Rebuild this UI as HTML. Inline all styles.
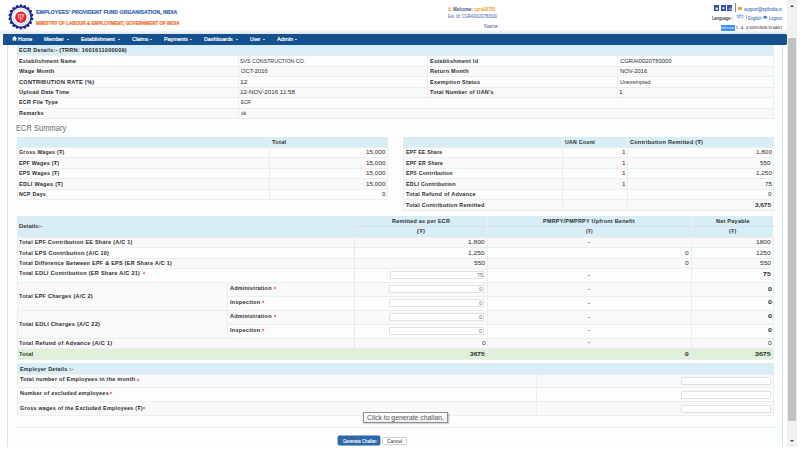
<!DOCTYPE html>
<html><head><meta charset="utf-8">
<style>
html,body{margin:0;padding:0;overflow:hidden}
body{width:800px;height:454px;position:relative;background:#ffffff;font-family:"Liberation Sans",sans-serif}
.r{position:absolute}
.t{position:absolute;white-space:nowrap;line-height:1;transform-origin:0 0}
</style></head><body>
<div class="r" style="left:0.00px;top:29.30px;width:787.00px;height:5.20px;background:linear-gradient(#ffffff,#f4f6f9 40%,#dfe5ee)"></div><div class="r" style="left:7.50px;top:44.50px;width:775.50px;height:402.50px;background:#fcfdfd"></div><div class="r" style="left:7.30px;top:44.50px;width:1.00px;height:402.50px;background:#d3e4f3"></div><div class="r" style="left:782.30px;top:44.50px;width:1.00px;height:402.50px;background:#d3e4f3"></div><div class="r" style="left:787.00px;top:0.00px;width:10.00px;height:447.00px;background:#f1f1f1"></div><div class="r" style="left:788.00px;top:38.00px;width:8.00px;height:382.70px;background:#c1c1c1"></div><div class="r" style="left:713.50px;top:5.10px;width:5.50px;height:5.65px;background:#2f50a8"></div><div class="r" style="left:720.50px;top:5.10px;width:5.20px;height:5.65px;background:#2f50a8"></div><div class="r" style="left:727.00px;top:5.10px;width:5.10px;height:5.65px;background:#2f50a8"></div><div class="r" style="left:735.20px;top:3.10px;width:0.80px;height:9.40px;background:#7a88c8"></div><div class="r" style="left:738.00px;top:6.80px;width:4.40px;height:3.30px;background:#f0a830;border-radius:0.6px"></div><div class="r" style="left:745.90px;top:15.40px;width:0.60px;height:5.00px;background:#b5b5b5"></div><div class="r" style="left:720.50px;top:25.20px;width:14.00px;height:5.90px;background:#3d8ff0"></div><div class="r" style="left:16.80px;top:44.00px;width:757.20px;height:11.30px;background:#d9edf7"></div><div class="r" style="left:16.80px;top:65.80px;width:757.20px;height:10.40px;background:#f9f9f9"></div><div class="r" style="left:16.80px;top:86.60px;width:757.20px;height:10.50px;background:#f9f9f9"></div><div class="r" style="left:16.80px;top:107.60px;width:757.20px;height:10.40px;background:#f9f9f9"></div><div class="r" style="left:16.80px;top:55.30px;width:757.20px;height:1.00px;background:#ededed"></div><div class="r" style="left:16.80px;top:65.80px;width:757.20px;height:1.00px;background:#ededed"></div><div class="r" style="left:16.80px;top:76.20px;width:757.20px;height:1.00px;background:#ededed"></div><div class="r" style="left:16.80px;top:86.60px;width:757.20px;height:1.00px;background:#ededed"></div><div class="r" style="left:16.80px;top:97.10px;width:757.20px;height:1.00px;background:#ededed"></div><div class="r" style="left:16.80px;top:107.60px;width:757.20px;height:1.00px;background:#ededed"></div><div class="r" style="left:16.80px;top:118.00px;width:757.20px;height:1.00px;background:#ededed"></div><div class="r" style="left:16.80px;top:55.30px;width:1.00px;height:63.20px;background:#ededed"></div><div class="r" style="left:773.00px;top:55.30px;width:1.00px;height:63.20px;background:#ededed"></div><div class="r" style="left:238.00px;top:55.30px;width:1.00px;height:62.70px;background:#ededed"></div><div class="r" style="left:427.20px;top:55.30px;width:1.00px;height:41.80px;background:#ededed"></div><div class="r" style="left:617.30px;top:55.30px;width:1.00px;height:41.80px;background:#ededed"></div><div class="r" style="left:17.00px;top:136.50px;width:370.80px;height:10.30px;background:#d9edf7"></div><div class="r" style="left:17.00px;top:157.20px;width:370.80px;height:10.50px;background:#f9f9f9"></div><div class="r" style="left:17.00px;top:178.20px;width:370.80px;height:10.50px;background:#f9f9f9"></div><div class="r" style="left:17.00px;top:146.80px;width:370.80px;height:1.00px;background:#ededed"></div><div class="r" style="left:17.00px;top:157.20px;width:370.80px;height:1.00px;background:#ededed"></div><div class="r" style="left:17.00px;top:167.70px;width:370.80px;height:1.00px;background:#ededed"></div><div class="r" style="left:17.00px;top:178.20px;width:370.80px;height:1.00px;background:#ededed"></div><div class="r" style="left:17.00px;top:188.70px;width:370.80px;height:1.00px;background:#ededed"></div><div class="r" style="left:17.00px;top:199.20px;width:370.80px;height:1.00px;background:#ededed"></div><div class="r" style="left:17.00px;top:146.80px;width:1.00px;height:53.40px;background:#ededed"></div><div class="r" style="left:386.80px;top:146.80px;width:1.00px;height:53.40px;background:#ededed"></div><div class="r" style="left:269.30px;top:136.50px;width:1.00px;height:62.70px;background:#ededed"></div><div class="r" style="left:403.30px;top:136.50px;width:370.40px;height:10.30px;background:#d9edf7"></div><div class="r" style="left:403.30px;top:157.30px;width:370.40px;height:10.50px;background:#f9f9f9"></div><div class="r" style="left:403.30px;top:178.30px;width:370.40px;height:10.50px;background:#f9f9f9"></div><div class="r" style="left:403.30px;top:199.30px;width:370.40px;height:10.50px;background:#f9f9f9"></div><div class="r" style="left:403.30px;top:146.80px;width:370.40px;height:1.00px;background:#ededed"></div><div class="r" style="left:403.30px;top:157.30px;width:370.40px;height:1.00px;background:#ededed"></div><div class="r" style="left:403.30px;top:167.80px;width:370.40px;height:1.00px;background:#ededed"></div><div class="r" style="left:403.30px;top:178.30px;width:370.40px;height:1.00px;background:#ededed"></div><div class="r" style="left:403.30px;top:188.80px;width:370.40px;height:1.00px;background:#ededed"></div><div class="r" style="left:403.30px;top:199.30px;width:370.40px;height:1.00px;background:#ededed"></div><div class="r" style="left:403.30px;top:209.80px;width:370.40px;height:1.00px;background:#ededed"></div><div class="r" style="left:403.30px;top:146.80px;width:1.00px;height:64.00px;background:#ededed"></div><div class="r" style="left:772.70px;top:146.80px;width:1.00px;height:64.00px;background:#ededed"></div><div class="r" style="left:562.00px;top:136.50px;width:1.00px;height:73.30px;background:#ededed"></div><div class="r" style="left:627.30px;top:136.50px;width:1.00px;height:73.30px;background:#ededed"></div><div class="r" style="left:16.80px;top:216.00px;width:756.70px;height:21.00px;background:#d9edf7"></div><div class="r" style="left:354.00px;top:226.20px;width:419.50px;height:1.00px;background:#cfe2ee"></div><div class="r" style="left:16.80px;top:237.00px;width:756.70px;height:10.40px;background:#f9f9f9"></div><div class="r" style="left:16.80px;top:257.80px;width:756.70px;height:10.50px;background:#f9f9f9"></div><div class="r" style="left:16.80px;top:282.20px;width:756.70px;height:13.80px;background:#f9f9f9"></div><div class="r" style="left:16.80px;top:310.10px;width:756.70px;height:14.00px;background:#f9f9f9"></div><div class="r" style="left:16.80px;top:338.10px;width:756.70px;height:10.30px;background:#f9f9f9"></div><div class="r" style="left:16.80px;top:296.00px;width:210.50px;height:14.10px;background:#f9f9f9"></div><div class="r" style="left:16.80px;top:324.10px;width:210.50px;height:14.00px;background:#f9f9f9"></div><div class="r" style="left:16.80px;top:348.40px;width:756.70px;height:10.40px;background:#dff0d8"></div><div class="r" style="left:16.80px;top:237.00px;width:756.70px;height:1.00px;background:#ededed"></div><div class="r" style="left:16.80px;top:247.40px;width:756.70px;height:1.00px;background:#ededed"></div><div class="r" style="left:16.80px;top:257.80px;width:756.70px;height:1.00px;background:#ededed"></div><div class="r" style="left:16.80px;top:268.30px;width:756.70px;height:1.00px;background:#ededed"></div><div class="r" style="left:16.80px;top:282.20px;width:756.70px;height:1.00px;background:#ededed"></div><div class="r" style="left:227.30px;top:296.00px;width:546.20px;height:1.00px;background:#ededed"></div><div class="r" style="left:16.80px;top:310.10px;width:756.70px;height:1.00px;background:#ededed"></div><div class="r" style="left:227.30px;top:324.10px;width:546.20px;height:1.00px;background:#ededed"></div><div class="r" style="left:16.80px;top:338.10px;width:756.70px;height:1.00px;background:#ededed"></div><div class="r" style="left:16.80px;top:348.40px;width:756.70px;height:1.00px;background:#ededed"></div><div class="r" style="left:16.80px;top:358.80px;width:756.70px;height:1.00px;background:#ededed"></div><div class="r" style="left:16.80px;top:237.00px;width:1.00px;height:122.00px;background:#ededed"></div><div class="r" style="left:772.50px;top:237.00px;width:1.00px;height:122.00px;background:#ededed"></div><div class="r" style="left:227.30px;top:282.20px;width:1.00px;height:55.90px;background:#ededed"></div><div class="r" style="left:354.00px;top:216.00px;width:1.00px;height:132.40px;background:#e8e8e8"></div><div class="r" style="left:486.70px;top:216.00px;width:1.00px;height:142.80px;background:#ededed"></div><div class="r" style="left:691.10px;top:216.00px;width:1.00px;height:142.80px;background:#ededed"></div><div class="r" style="left:389.90px;top:270.90px;width:94.50px;height:8.50px;box-sizing:border-box;background:#fff;border:0.6px solid #e0e0e0;border-radius:1.5px;box-shadow:0 0 0.8px rgba(0,0,0,.10)"></div><div class="r" style="left:388.50px;top:284.80px;width:95.90px;height:8.50px;box-sizing:border-box;background:#fff;border:0.6px solid #e0e0e0;border-radius:1.5px;box-shadow:0 0 0.8px rgba(0,0,0,.10)"></div><div class="r" style="left:388.50px;top:298.70px;width:95.90px;height:8.50px;box-sizing:border-box;background:#fff;border:0.6px solid #e0e0e0;border-radius:1.5px;box-shadow:0 0 0.8px rgba(0,0,0,.10)"></div><div class="r" style="left:388.50px;top:312.60px;width:95.90px;height:8.50px;box-sizing:border-box;background:#fff;border:0.6px solid #e0e0e0;border-radius:1.5px;box-shadow:0 0 0.8px rgba(0,0,0,.10)"></div><div class="r" style="left:388.50px;top:326.50px;width:95.90px;height:8.50px;box-sizing:border-box;background:#fff;border:0.6px solid #e0e0e0;border-radius:1.5px;box-shadow:0 0 0.8px rgba(0,0,0,.10)"></div><div class="r" style="left:588.20px;top:241.55px;width:1.60px;height:0.70px;background:#9a9a9a"></div><div class="r" style="left:588.20px;top:275.05px;width:1.60px;height:0.70px;background:#9a9a9a"></div><div class="r" style="left:588.20px;top:288.85px;width:1.60px;height:0.70px;background:#9a9a9a"></div><div class="r" style="left:588.20px;top:302.65px;width:1.60px;height:0.70px;background:#9a9a9a"></div><div class="r" style="left:588.20px;top:316.65px;width:1.60px;height:0.70px;background:#9a9a9a"></div><div class="r" style="left:588.20px;top:330.45px;width:1.60px;height:0.70px;background:#9a9a9a"></div><div class="r" style="left:588.20px;top:342.05px;width:1.60px;height:0.70px;background:#9a9a9a"></div><div class="r" style="left:16.80px;top:363.00px;width:756.90px;height:10.80px;background:#d9edf7"></div><div class="r" style="left:16.80px;top:373.80px;width:756.90px;height:13.30px;background:#f9f9f9"></div><div class="r" style="left:16.80px;top:400.80px;width:756.90px;height:14.40px;background:#f9f9f9"></div><div class="r" style="left:16.80px;top:373.80px;width:756.90px;height:1.00px;background:#ededed"></div><div class="r" style="left:16.80px;top:387.10px;width:756.90px;height:1.00px;background:#ededed"></div><div class="r" style="left:16.80px;top:400.80px;width:756.90px;height:1.00px;background:#ededed"></div><div class="r" style="left:16.80px;top:415.20px;width:756.90px;height:1.00px;background:#ededed"></div><div class="r" style="left:16.80px;top:373.80px;width:1.00px;height:41.90px;background:#ededed"></div><div class="r" style="left:772.70px;top:373.80px;width:1.00px;height:41.90px;background:#ededed"></div><div class="r" style="left:535.50px;top:373.80px;width:1.00px;height:41.40px;background:#ededed"></div><div class="r" style="left:680.70px;top:376.90px;width:90.00px;height:8.40px;box-sizing:border-box;background:#fff;border:0.6px solid #e0e0e0;border-radius:1.5px;box-shadow:0 0 0.8px rgba(0,0,0,.10)"></div><div class="r" style="left:680.70px;top:390.70px;width:90.00px;height:8.40px;box-sizing:border-box;background:#fff;border:0.6px solid #e0e0e0;border-radius:1.5px;box-shadow:0 0 0.8px rgba(0,0,0,.10)"></div><div class="r" style="left:680.70px;top:404.60px;width:90.00px;height:8.40px;box-sizing:border-box;background:#fff;border:0.6px solid #e0e0e0;border-radius:1.5px;box-shadow:0 0 0.8px rgba(0,0,0,.10)"></div><div class="r" style="left:17.00px;top:427.30px;width:758.00px;height:1.00px;background:#eeeeee"></div><div class="r" style="left:363.30px;top:411.90px;width:84.60px;height:11.40px;box-sizing:border-box;background:linear-gradient(#ffffff,#eeeef5);border:0.7px solid #8f8f8f;box-shadow:1px 1.2px 1.6px rgba(0,0,0,.33)"></div><div class="r" style="left:337.80px;top:436.20px;width:42.20px;height:8.45px;background:#2c69aa;border-radius:1.6px;box-shadow:0 0 0 0.4px #285f99"></div><div class="r" style="left:381.90px;top:436.70px;width:25.30px;height:7.95px;box-sizing:border-box;background:#fff;border:0.6px solid #d0d0d0;border-radius:1.5px"></div>
<div class="r" style="left:3px;top:34px;width:784px;height:10.5px;background:#15508f;border-radius:0 1.5px 1.5px 0"></div><svg style="position:absolute;left:787px;top:0" width="10" height="447"><path d="M3 7 L5 4.8 L7 7 Z" fill="#505050"/><path d="M3 440 L5 442.2 L7 440 Z" fill="#505050"/></svg><svg style="position:absolute;left:0;top:0" width="40" height="34"><circle cx="31.83" cy="18.83" r="1.5" fill="#1d2a8c"/><circle cx="30.51" cy="22.45" r="1.5" fill="#1d2a8c"/><circle cx="28.03" cy="25.40" r="1.5" fill="#1d2a8c"/><circle cx="24.70" cy="27.33" r="1.5" fill="#1d2a8c"/><circle cx="20.90" cy="28.00" r="1.5" fill="#1d2a8c"/><circle cx="17.10" cy="27.33" r="1.5" fill="#1d2a8c"/><circle cx="13.77" cy="25.40" r="1.5" fill="#1d2a8c"/><circle cx="11.29" cy="22.45" r="1.5" fill="#1d2a8c"/><circle cx="9.97" cy="18.83" r="1.5" fill="#1d2a8c"/><circle cx="9.97" cy="14.97" r="1.5" fill="#1d2a8c"/><circle cx="11.29" cy="11.35" r="1.5" fill="#1d2a8c"/><circle cx="13.77" cy="8.40" r="1.5" fill="#1d2a8c"/><circle cx="17.10" cy="6.47" r="1.5" fill="#1d2a8c"/><circle cx="20.90" cy="5.80" r="1.5" fill="#1d2a8c"/><circle cx="24.70" cy="6.47" r="1.5" fill="#1d2a8c"/><circle cx="28.03" cy="8.40" r="1.5" fill="#1d2a8c"/><circle cx="30.51" cy="11.35" r="1.5" fill="#1d2a8c"/><circle cx="31.83" cy="14.97" r="1.5" fill="#1d2a8c"/><circle cx="20.90" cy="16.90" r="11.0" fill="#1d2a8c"/><circle cx="20.90" cy="16.90" r="9.5" fill="#ffffff"/><circle cx="20.90" cy="16.90" r="7.9" fill="none" stroke="#d3e2f4" stroke-width="1.5"/><circle cx="20.90" cy="17.30" r="5.7" fill="#e8232f"/><g fill="#f8c8cb"><rect x="17.6" y="14.0" width="6.6" height="0.8"/><rect x="18.0" y="14.8" width="0.8" height="3.6"/><rect x="19.9" y="14.8" width="0.8" height="4.4"/><rect x="21.8" y="14.8" width="0.8" height="3.6"/><rect x="23.4" y="14.8" width="0.7" height="2.6"/><rect x="19.0" y="18.6" width="3.8" height="0.7"/><rect x="20.5" y="19.3" width="0.8" height="2.2"/></g></svg><svg style="position:absolute;left:447.5px;top:6.5px" width="4" height="5"><circle cx="1.5" cy="1.3" r="1.15" fill="#f0a030"/><path d="M0 4.0 C0 2.2 3.0 2.2 3.0 4.0 Z" fill="#f0a030"/></svg><svg style="position:absolute;left:713.5px;top:5.1px" width="20" height="6"><rect x="1.6" y="2.6" width="2.4" height="2.2" fill="#e8eefa"/><rect x="8.5" y="2.2" width="1.9" height="1.9" fill="#e8eefa"/><path d="M14.6 3.2 h3.8 M14.6 4.6 h3.8" stroke="#e8eefa" stroke-width="0.6"/></svg><svg style="position:absolute;left:736px;top:14px" width="8" height="6"><path d="M0.3 1.3 H7.6 M1.5 1.3 c-1 1 0 2.6 1 2.2 c0.6 -0.3 0.2 -1 -0.4 -0.8 M3.2 1.3 v3.6 M5 1.3 c-0.8 1 0 2.4 0.8 2 M6.8 1.3 v3.6 M3.6 0.2 c1 -0.4 1.6 0.4 1.4 1" stroke="#5c8ad6" stroke-width="0.6" fill="none"/></svg><svg style="position:absolute;left:763px;top:15px" width="5" height="5"><path d="M0.4 1 h2 v-0.8 l2.3 2 l-2.3 2 v-0.8 h-2 Z" fill="#4f7fd0"/></svg><svg style="position:absolute;left:12px;top:36px" width="6" height="6"><path d="M0.3 2.6 L2.5 0.3 L4.7 2.6 M1 2.2 V4.6 H2 V3.3 H3 V4.6 H4 V2.2" fill="#fff" stroke="#fff" stroke-width="0.5"/></svg><div class="r" style="left:67px;top:39px;width:2px;height:1px;background:#b9cbe2"></div><div class="r" style="left:118px;top:39px;width:2px;height:1px;background:#b9cbe2"></div><div class="r" style="left:150px;top:39px;width:2px;height:1px;background:#b9cbe2"></div><div class="r" style="left:190px;top:39px;width:2px;height:1px;background:#b9cbe2"></div><div class="r" style="left:236px;top:39px;width:2px;height:1px;background:#b9cbe2"></div><div class="r" style="left:263px;top:39px;width:2px;height:1px;background:#b9cbe2"></div><div class="r" style="left:295px;top:39px;width:2px;height:1px;background:#b9cbe2"></div><svg style="position:absolute;left:141.90px;top:271.30px" width="4" height="4"><g stroke="#e8474a" stroke-width="0.55"><path d="M2 0.6 V3.4"/><path d="M0.8 1.3 L3.2 2.7"/><path d="M0.8 2.7 L3.2 1.3"/></g></svg><svg style="position:absolute;left:273.20px;top:286.10px" width="4" height="4"><g stroke="#e8474a" stroke-width="0.55"><path d="M2 0.6 V3.4"/><path d="M0.8 1.3 L3.2 2.7"/><path d="M0.8 2.7 L3.2 1.3"/></g></svg><svg style="position:absolute;left:273.20px;top:314.30px" width="4" height="4"><g stroke="#e8474a" stroke-width="0.55"><path d="M2 0.6 V3.4"/><path d="M0.8 1.3 L3.2 2.7"/><path d="M0.8 2.7 L3.2 1.3"/></g></svg><svg style="position:absolute;left:261.30px;top:299.70px" width="4" height="4"><g stroke="#e8474a" stroke-width="0.55"><path d="M2 0.6 V3.4"/><path d="M0.8 1.3 L3.2 2.7"/><path d="M0.8 2.7 L3.2 1.3"/></g></svg><svg style="position:absolute;left:261.30px;top:327.80px" width="4" height="4"><g stroke="#e8474a" stroke-width="0.55"><path d="M2 0.6 V3.4"/><path d="M0.8 1.3 L3.2 2.7"/><path d="M0.8 2.7 L3.2 1.3"/></g></svg><svg style="position:absolute;left:135.90px;top:377.50px" width="4" height="4"><g stroke="#e8474a" stroke-width="0.55"><path d="M2 0.6 V3.4"/><path d="M0.8 1.3 L3.2 2.7"/><path d="M0.8 2.7 L3.2 1.3"/></g></svg><svg style="position:absolute;left:109.40px;top:391.30px" width="4" height="4"><g stroke="#e8474a" stroke-width="0.55"><path d="M2 0.6 V3.4"/><path d="M0.8 1.3 L3.2 2.7"/><path d="M0.8 2.7 L3.2 1.3"/></g></svg><svg style="position:absolute;left:141.90px;top:406.00px" width="4" height="4"><g stroke="#e8474a" stroke-width="0.55"><path d="M2 0.6 V3.4"/><path d="M0.8 1.3 L3.2 2.7"/><path d="M0.8 2.7 L3.2 1.3"/></g></svg>
<div class="t" style="left:36.40px;top:9.80px;font-size:5.80px;font-weight:bold;color:#3568b4;transform:scaleX(0.9064);-webkit-text-stroke:0.22px #3568b4;">EMPLOYEES' PROVIDENT FUND ORGANISATION, INDIA</div><div class="t" style="left:36.40px;top:22.10px;font-size:4.60px;font-weight:bold;color:#f2701f;transform:scaleX(0.9897);-webkit-text-stroke:0.18px #f2701f;">MINISTRY OF LABOUR &amp; EMPLOYMENT, GOVERNMENT OF INDIA</div><div class="t" style="left:452.90px;top:7.90px;font-size:4.80px;font-weight:bold;color:#3f5082;transform:scaleX(0.8762);-webkit-text-stroke:0.02px #3f5082;">Welcome:</div><div class="t" style="left:474.00px;top:7.90px;font-size:4.80px;font-weight:bold;color:#f0a030;transform:scaleX(0.8560);-webkit-text-stroke:0.02px #f0a030;">cgrai20783</div><div class="t" style="left:448.20px;top:15.20px;font-size:4.70px;font-weight:normal;color:#5565b8;transform:scaleX(0.8632);-webkit-text-stroke:0.04px #5565b8;">Est. Id: CGRAI0020783000</div><div class="t" style="left:484.40px;top:24.80px;font-size:4.70px;font-weight:normal;color:#5565b8;transform:scaleX(1.1000);-webkit-text-stroke:0.04px #5565b8;">Name :</div><div class="t" style="left:743.60px;top:8.30px;font-size:4.70px;font-weight:normal;color:#5a80c8;transform:scaleX(0.9048);-webkit-text-stroke:0.12px #5a80c8;">support@epfindia.in</div><div class="t" style="left:712.20px;top:16.60px;font-size:4.80px;font-weight:normal;color:#555555;transform:scaleX(0.8667);-webkit-text-stroke:0.18px #555;">Language :</div><div class="t" style="left:748.20px;top:16.70px;font-size:4.70px;font-weight:normal;color:#4f86d0;transform:scaleX(0.8733);-webkit-text-stroke:0.12px #4f86d0;">English</div><div class="t" style="left:769.20px;top:16.70px;font-size:4.70px;font-weight:normal;color:#4f86d0;transform:scaleX(0.9000);-webkit-text-stroke:0.12px #4f86d0;">Logout</div><div class="t" style="left:720.31px;top:25.60px;font-size:3.90px;font-weight:normal;color:#eaf2ff;transform:scaleX(1.0909);">Version</div><div class="t" style="left:735.60px;top:26.40px;font-size:4.20px;font-weight:normal;color:#4a4a4a;transform:scaleX(0.8755);-webkit-text-stroke:0.12px #4a4a4a;">1 . 4 . 0  10/11/2016 11:04:57</div><div class="t" style="left:17.80px;top:36.60px;font-size:5.70px;font-weight:normal;color:#ffffff;transform:scaleX(0.9467);-webkit-text-stroke:0.2px #fff;">Home</div><div class="t" style="left:44.20px;top:36.60px;font-size:5.70px;font-weight:normal;color:#ffffff;transform:scaleX(0.9429);-webkit-text-stroke:0.2px #fff;">Member</div><div class="t" style="left:80.90px;top:36.60px;font-size:5.70px;font-weight:normal;color:#ffffff;transform:scaleX(0.9472);-webkit-text-stroke:0.2px #fff;">Establishment</div><div class="t" style="left:131.50px;top:36.60px;font-size:5.70px;font-weight:normal;color:#ffffff;transform:scaleX(0.9471);-webkit-text-stroke:0.2px #fff;">Claims</div><div class="t" style="left:164.00px;top:36.60px;font-size:5.70px;font-weight:normal;color:#ffffff;transform:scaleX(0.9440);-webkit-text-stroke:0.2px #fff;">Payments</div><div class="t" style="left:204.00px;top:36.60px;font-size:5.70px;font-weight:normal;color:#ffffff;transform:scaleX(0.9387);-webkit-text-stroke:0.2px #fff;">Dashboards</div><div class="t" style="left:249.80px;top:36.60px;font-size:5.70px;font-weight:normal;color:#ffffff;transform:scaleX(0.8667);-webkit-text-stroke:0.2px #fff;">User</div><div class="t" style="left:276.80px;top:36.60px;font-size:5.70px;font-weight:normal;color:#ffffff;transform:scaleX(1.0062);-webkit-text-stroke:0.2px #fff;">Admin</div><div class="t" style="left:19.00px;top:47.30px;font-size:6.20px;font-weight:bold;color:#2e2e2e;transform:scaleX(0.8983);-webkit-text-stroke:0.02px #2e2e2e;letter-spacing:0.28px;">ECR Details:- (TRRN: 1601611000009)</div><div class="t" style="left:19.00px;top:57.60px;font-size:6.20px;font-weight:bold;color:#2e2e2e;transform:scaleX(0.8682);-webkit-text-stroke:0.02px #2e2e2e;letter-spacing:0.28px;">Establishment Name</div><div class="t" style="left:239.99px;top:58.60px;font-size:5.80px;font-weight:normal;color:#2e2e2e;transform:scaleX(0.9058);">SVS CONSTRUCTION CO.</div><div class="t" style="left:19.00px;top:68.10px;font-size:6.20px;font-weight:bold;color:#2e2e2e;transform:scaleX(0.9000);-webkit-text-stroke:0.02px #2e2e2e;letter-spacing:0.28px;">Wage Month</div><div class="t" style="left:240.90px;top:69.10px;font-size:5.80px;font-weight:normal;color:#2e2e2e;transform:scaleX(0.9962);">OCT-2016</div><div class="t" style="left:19.00px;top:78.50px;font-size:6.20px;font-weight:bold;color:#2e2e2e;transform:scaleX(0.9098);-webkit-text-stroke:0.02px #2e2e2e;letter-spacing:0.28px;">CONTRIBUTION RATE (%)</div><div class="t" style="left:239.74px;top:79.50px;font-size:5.80px;font-weight:normal;color:#2e2e2e;transform:scaleX(1.1600);">12</div><div class="t" style="left:19.00px;top:88.90px;font-size:6.20px;font-weight:bold;color:#2e2e2e;transform:scaleX(0.8893);-webkit-text-stroke:0.02px #2e2e2e;letter-spacing:0.28px;">Upload Date Time</div><div class="t" style="left:239.82px;top:89.90px;font-size:5.80px;font-weight:normal;color:#2e2e2e;transform:scaleX(1.0760);">12-NOV-2016 11:58</div><div class="t" style="left:19.00px;top:99.40px;font-size:6.20px;font-weight:bold;color:#2e2e2e;transform:scaleX(0.8750);-webkit-text-stroke:0.02px #2e2e2e;letter-spacing:0.28px;">ECR File Type</div><div class="t" style="left:240.90px;top:100.40px;font-size:5.80px;font-weight:normal;color:#2e2e2e;transform:scaleX(0.7833);">ECR</div><div class="t" style="left:19.00px;top:109.90px;font-size:6.20px;font-weight:bold;color:#2e2e2e;transform:scaleX(0.8786);-webkit-text-stroke:0.02px #2e2e2e;letter-spacing:0.28px;">Remarks</div><div class="t" style="left:240.90px;top:111.40px;font-size:5.80px;font-weight:normal;color:#2e2e2e;transform:scaleX(0.8500);">ok</div><div class="t" style="left:429.60px;top:57.60px;font-size:6.20px;font-weight:bold;color:#2e2e2e;transform:scaleX(0.8944);-webkit-text-stroke:0.02px #2e2e2e;letter-spacing:0.28px;">Establishment Id</div><div class="t" style="left:620.10px;top:58.60px;font-size:5.70px;font-weight:normal;color:#2e2e2e;transform:scaleX(1.0388);">CGRAI0020783000</div><div class="t" style="left:429.60px;top:68.10px;font-size:6.20px;font-weight:bold;color:#2e2e2e;transform:scaleX(0.8907);-webkit-text-stroke:0.02px #2e2e2e;letter-spacing:0.28px;">Return Month</div><div class="t" style="left:620.10px;top:69.10px;font-size:5.70px;font-weight:normal;color:#2e2e2e;transform:scaleX(1.0231);">NOV-2016</div><div class="t" style="left:429.60px;top:78.50px;font-size:6.20px;font-weight:bold;color:#2e2e2e;transform:scaleX(0.8857);-webkit-text-stroke:0.02px #2e2e2e;letter-spacing:0.28px;">Exemption Status</div><div class="t" style="left:620.10px;top:79.50px;font-size:5.70px;font-weight:normal;color:#2e2e2e;transform:scaleX(0.9437);">Unexempted</div><div class="t" style="left:429.60px;top:88.90px;font-size:6.20px;font-weight:bold;color:#2e2e2e;transform:scaleX(0.8753);-webkit-text-stroke:0.02px #2e2e2e;letter-spacing:0.28px;">Total Number of UAN's</div><div class="t" style="left:618.95px;top:89.90px;font-size:5.70px;font-weight:normal;color:#2e2e2e;transform:scaleX(1.1500);">1</div><div class="t" style="left:16.29px;top:124.30px;font-size:8.30px;font-weight:normal;color:#6b6b6b;transform:scaleX(0.9093);">ECR Summary</div><div class="t" style="left:271.50px;top:138.60px;font-size:6.00px;font-weight:bold;color:#2e2e2e;transform:scaleX(0.9400);-webkit-text-stroke:0.02px #2e2e2e;letter-spacing:0.28px;">Total</div><div class="t" style="left:19.30px;top:149.20px;font-size:6.00px;font-weight:bold;color:#2e2e2e;transform:scaleX(0.8804);-webkit-text-stroke:0.02px #2e2e2e;letter-spacing:0.28px;">Gross Wages (&#358;)</div><div class="t" style="left:365.60px;top:150.20px;font-size:5.80px;font-weight:normal;color:#2e2e2e;transform:scaleX(1.1000);">15,000</div><div class="t" style="left:19.30px;top:159.60px;font-size:6.00px;font-weight:bold;color:#2e2e2e;transform:scaleX(0.8844);-webkit-text-stroke:0.02px #2e2e2e;letter-spacing:0.28px;">EPF Wages (&#358;)</div><div class="t" style="left:365.60px;top:160.60px;font-size:5.80px;font-weight:normal;color:#2e2e2e;transform:scaleX(1.1000);">15,000</div><div class="t" style="left:19.30px;top:170.10px;font-size:6.00px;font-weight:bold;color:#2e2e2e;transform:scaleX(0.8844);-webkit-text-stroke:0.02px #2e2e2e;letter-spacing:0.28px;">EPS Wages (&#358;)</div><div class="t" style="left:365.60px;top:171.10px;font-size:5.80px;font-weight:normal;color:#2e2e2e;transform:scaleX(1.1000);">15,000</div><div class="t" style="left:19.30px;top:180.60px;font-size:6.00px;font-weight:bold;color:#2e2e2e;transform:scaleX(0.9234);-webkit-text-stroke:0.02px #2e2e2e;letter-spacing:0.28px;">EDLI Wages (&#358;)</div><div class="t" style="left:365.60px;top:181.60px;font-size:5.80px;font-weight:normal;color:#2e2e2e;transform:scaleX(1.1000);">15,000</div><div class="t" style="left:19.30px;top:191.10px;font-size:6.00px;font-weight:bold;color:#2e2e2e;transform:scaleX(0.8767);-webkit-text-stroke:0.02px #2e2e2e;letter-spacing:0.28px;">NCP Days</div><div class="t" style="left:382.10px;top:192.10px;font-size:5.80px;font-weight:normal;color:#2e2e2e;transform:scaleX(1.1000);">0</div><div class="t" style="left:564.50px;top:138.60px;font-size:6.00px;font-weight:bold;color:#2e2e2e;transform:scaleX(0.8706);-webkit-text-stroke:0.02px #2e2e2e;letter-spacing:0.28px;">UAN Count</div><div class="t" style="left:629.70px;top:138.60px;font-size:6.00px;font-weight:bold;color:#2e2e2e;transform:scaleX(0.9177);-webkit-text-stroke:0.02px #2e2e2e;letter-spacing:0.28px;">Contribution Remitted (&#358;)</div><div class="t" style="left:406.10px;top:149.20px;font-size:6.00px;font-weight:bold;color:#2e2e2e;transform:scaleX(0.8465);-webkit-text-stroke:0.02px #2e2e2e;letter-spacing:0.28px;">EPF EE Share</div><div class="t" style="left:621.70px;top:150.20px;font-size:5.80px;font-weight:normal;color:#2e2e2e;transform:scaleX(1.1000);">1</div><div class="t" style="left:755.70px;top:150.20px;font-size:5.80px;font-weight:normal;color:#2e2e2e;transform:scaleX(1.1000);">1,800</div><div class="t" style="left:406.10px;top:159.70px;font-size:6.00px;font-weight:bold;color:#2e2e2e;transform:scaleX(0.8581);-webkit-text-stroke:0.02px #2e2e2e;letter-spacing:0.28px;">EPF ER Share</div><div class="t" style="left:621.70px;top:160.70px;font-size:5.80px;font-weight:normal;color:#2e2e2e;transform:scaleX(1.1000);">1</div><div class="t" style="left:760.10px;top:160.70px;font-size:5.80px;font-weight:normal;color:#2e2e2e;transform:scaleX(1.1000);">550</div><div class="t" style="left:406.10px;top:170.20px;font-size:6.00px;font-weight:bold;color:#2e2e2e;transform:scaleX(0.8611);-webkit-text-stroke:0.02px #2e2e2e;letter-spacing:0.28px;">EPS Contribution</div><div class="t" style="left:621.70px;top:171.20px;font-size:5.80px;font-weight:normal;color:#2e2e2e;transform:scaleX(1.1000);">1</div><div class="t" style="left:755.70px;top:171.20px;font-size:5.80px;font-weight:normal;color:#2e2e2e;transform:scaleX(1.1000);">1,250</div><div class="t" style="left:406.10px;top:180.70px;font-size:6.00px;font-weight:bold;color:#2e2e2e;transform:scaleX(0.8893);-webkit-text-stroke:0.02px #2e2e2e;letter-spacing:0.28px;">EDLI Contribution</div><div class="t" style="left:621.70px;top:181.70px;font-size:5.80px;font-weight:normal;color:#2e2e2e;transform:scaleX(1.1000);">1</div><div class="t" style="left:764.50px;top:181.70px;font-size:5.80px;font-weight:normal;color:#2e2e2e;transform:scaleX(1.1000);">75</div><div class="t" style="left:406.10px;top:191.20px;font-size:6.00px;font-weight:bold;color:#2e2e2e;transform:scaleX(0.9132);-webkit-text-stroke:0.02px #2e2e2e;letter-spacing:0.28px;">Total Refund of Advance</div><div class="t" style="left:767.80px;top:192.20px;font-size:5.80px;font-weight:normal;color:#2e2e2e;transform:scaleX(1.1000);">0</div><div class="t" style="left:406.10px;top:201.70px;font-size:6.00px;font-weight:bold;color:#2e2e2e;transform:scaleX(0.9105);-webkit-text-stroke:0.02px #2e2e2e;letter-spacing:0.28px;">Total Contribution Remitted</div><div class="t" style="left:754.60px;top:202.70px;font-size:5.80px;font-weight:bold;color:#2e2e2e;transform:scaleX(1.1000);-webkit-text-stroke:0.02px #2e2e2e;">3,675</div><div class="t" style="left:19.00px;top:224.20px;font-size:5.90px;font-weight:bold;color:#383838;-webkit-text-stroke:0.02px #383838;">Details:-</div><div class="t" style="left:391.80px;top:218.30px;font-size:6.10px;font-weight:bold;color:#2e2e2e;transform:scaleX(0.8862);-webkit-text-stroke:0.02px #2e2e2e;letter-spacing:0.28px;">Remitted as per ECR</div><div class="t" style="left:417.20px;top:228.40px;font-size:6.10px;font-weight:bold;color:#2e2e2e;transform:scaleX(0.9500);-webkit-text-stroke:0.02px #2e2e2e;letter-spacing:0.28px;">(&#358;)</div><div class="t" style="left:543.40px;top:218.30px;font-size:6.10px;font-weight:bold;color:#2e2e2e;transform:scaleX(0.8931);-webkit-text-stroke:0.02px #2e2e2e;letter-spacing:0.28px;">PMRPY/PMPRPY Upfront Benefit</div><div class="t" style="left:586.20px;top:228.40px;font-size:6.10px;font-weight:bold;color:#2e2e2e;transform:scaleX(0.7875);-webkit-text-stroke:0.02px #2e2e2e;letter-spacing:0.28px;">(&#358;)</div><div class="t" style="left:715.50px;top:218.30px;font-size:6.10px;font-weight:bold;color:#2e2e2e;transform:scaleX(0.9000);-webkit-text-stroke:0.02px #2e2e2e;letter-spacing:0.28px;">Net Payable</div><div class="t" style="left:729.00px;top:228.40px;font-size:6.10px;font-weight:bold;color:#2e2e2e;transform:scaleX(0.8625);-webkit-text-stroke:0.02px #2e2e2e;letter-spacing:0.28px;">(&#358;)</div><div class="t" style="left:19.40px;top:239.40px;font-size:6.10px;font-weight:bold;color:#2e2e2e;transform:scaleX(0.8968);-webkit-text-stroke:0.02px #2e2e2e;letter-spacing:0.28px;">Total EPF Contribution EE Share (A/C 1)</div><div class="t" style="left:19.40px;top:249.70px;font-size:6.10px;font-weight:bold;color:#2e2e2e;transform:scaleX(0.9051);-webkit-text-stroke:0.02px #2e2e2e;letter-spacing:0.28px;">Total EPS Contribution (A/C 10)</div><div class="t" style="left:19.40px;top:259.90px;font-size:6.10px;font-weight:bold;color:#2e2e2e;transform:scaleX(0.9006);-webkit-text-stroke:0.02px #2e2e2e;letter-spacing:0.28px;">Total Difference Between EPF &amp; EPS (ER Share A/C 1)</div><div class="t" style="left:19.40px;top:270.40px;font-size:6.10px;font-weight:bold;color:#2e2e2e;transform:scaleX(0.9136);-webkit-text-stroke:0.02px #2e2e2e;letter-spacing:0.28px;">Total EDLI Contribution (ER Share A/C 21)</div><div class="t" style="left:19.40px;top:293.30px;font-size:6.10px;font-weight:bold;color:#2e2e2e;transform:scaleX(0.9000);-webkit-text-stroke:0.02px #2e2e2e;letter-spacing:0.28px;">Total EPF Charges (A/C 2)</div><div class="t" style="left:19.40px;top:321.10px;font-size:6.10px;font-weight:bold;color:#2e2e2e;transform:scaleX(0.9227);-webkit-text-stroke:0.02px #2e2e2e;letter-spacing:0.28px;">Total EDLI Charges (A/C 22)</div><div class="t" style="left:19.40px;top:340.00px;font-size:6.10px;font-weight:bold;color:#2e2e2e;transform:scaleX(0.9228);-webkit-text-stroke:0.02px #2e2e2e;letter-spacing:0.28px;">Total Refund of Advance (A/C 1)</div><div class="t" style="left:19.40px;top:350.60px;font-size:6.10px;font-weight:bold;color:#2e2e2e;transform:scaleX(0.9267);-webkit-text-stroke:0.02px #2e2e2e;letter-spacing:0.28px;">Total</div><div class="t" style="left:229.90px;top:285.20px;font-size:6.10px;font-weight:bold;color:#2e2e2e;transform:scaleX(0.8894);-webkit-text-stroke:0.02px #2e2e2e;letter-spacing:0.28px;">Administration</div><div class="t" style="left:229.90px;top:313.40px;font-size:6.10px;font-weight:bold;color:#2e2e2e;transform:scaleX(0.8894);-webkit-text-stroke:0.02px #2e2e2e;letter-spacing:0.28px;">Administration</div><div class="t" style="left:229.90px;top:298.80px;font-size:6.10px;font-weight:bold;color:#2e2e2e;transform:scaleX(0.9152);-webkit-text-stroke:0.02px #2e2e2e;letter-spacing:0.28px;">Inspection</div><div class="t" style="left:229.90px;top:326.90px;font-size:6.10px;font-weight:bold;color:#2e2e2e;transform:scaleX(0.9152);-webkit-text-stroke:0.02px #2e2e2e;letter-spacing:0.28px;">Inspection</div><div class="t" style="left:468.10px;top:240.30px;font-size:5.90px;font-weight:normal;color:#2e2e2e;transform:scaleX(1.1200);">1,800</div><div class="t" style="left:468.10px;top:250.70px;font-size:5.90px;font-weight:normal;color:#2e2e2e;transform:scaleX(1.1200);">1,250</div><div class="t" style="left:473.70px;top:261.00px;font-size:5.90px;font-weight:normal;color:#2e2e2e;transform:scaleX(1.1200);">550</div><div class="t" style="left:476.70px;top:273.10px;font-size:5.00px;font-weight:normal;color:#707070;transform:scaleX(1.1200);">75</div><div class="t" style="left:478.94px;top:287.00px;font-size:5.00px;font-weight:normal;color:#707070;transform:scaleX(1.1200);">0</div><div class="t" style="left:478.94px;top:300.90px;font-size:5.00px;font-weight:normal;color:#707070;transform:scaleX(1.1200);">0</div><div class="t" style="left:478.94px;top:314.80px;font-size:5.00px;font-weight:normal;color:#707070;transform:scaleX(1.1200);">0</div><div class="t" style="left:478.94px;top:328.70px;font-size:5.00px;font-weight:normal;color:#707070;transform:scaleX(1.1200);">0</div><div class="t" style="left:481.54px;top:341.00px;font-size:5.90px;font-weight:normal;color:#2e2e2e;transform:scaleX(1.1200);">0</div><div class="t" style="left:470.34px;top:351.60px;font-size:5.90px;font-weight:bold;color:#2e2e2e;transform:scaleX(1.1200);-webkit-text-stroke:0.02px #2e2e2e;">3675</div><div class="t" style="left:684.74px;top:250.70px;font-size:5.90px;font-weight:normal;color:#2e2e2e;transform:scaleX(1.1200);">0</div><div class="t" style="left:684.74px;top:261.00px;font-size:5.90px;font-weight:normal;color:#2e2e2e;transform:scaleX(1.1200);">0</div><div class="t" style="left:684.74px;top:351.60px;font-size:5.90px;font-weight:bold;color:#2e2e2e;transform:scaleX(1.1200);-webkit-text-stroke:0.02px #2e2e2e;">0</div><div class="t" style="left:756.34px;top:240.40px;font-size:5.90px;font-weight:normal;color:#2e2e2e;transform:scaleX(1.1200);">1800</div><div class="t" style="left:756.34px;top:250.70px;font-size:5.90px;font-weight:normal;color:#2e2e2e;transform:scaleX(1.1200);">1250</div><div class="t" style="left:759.70px;top:261.00px;font-size:5.90px;font-weight:normal;color:#2e2e2e;transform:scaleX(1.1200);">550</div><div class="t" style="left:763.35px;top:271.30px;font-size:6.10px;font-weight:bold;color:#2e2e2e;transform:scaleX(1.1500);-webkit-text-stroke:0.02px #2e2e2e;">75</div><div class="t" style="left:767.95px;top:285.50px;font-size:6.10px;font-weight:bold;color:#2e2e2e;transform:scaleX(1.1500);-webkit-text-stroke:0.02px #2e2e2e;">0</div><div class="t" style="left:767.95px;top:299.30px;font-size:6.10px;font-weight:bold;color:#2e2e2e;transform:scaleX(1.1500);-webkit-text-stroke:0.02px #2e2e2e;">0</div><div class="t" style="left:767.95px;top:313.40px;font-size:6.10px;font-weight:bold;color:#2e2e2e;transform:scaleX(1.1500);-webkit-text-stroke:0.02px #2e2e2e;">0</div><div class="t" style="left:767.95px;top:327.30px;font-size:6.10px;font-weight:bold;color:#2e2e2e;transform:scaleX(1.1500);-webkit-text-stroke:0.02px #2e2e2e;">0</div><div class="t" style="left:767.54px;top:341.00px;font-size:5.90px;font-weight:normal;color:#2e2e2e;transform:scaleX(1.1200);">0</div><div class="t" style="left:755.30px;top:350.60px;font-size:6.10px;font-weight:bold;color:#2e2e2e;transform:scaleX(1.1500);-webkit-text-stroke:0.02px #2e2e2e;">3675</div><div class="t" style="left:19.60px;top:365.90px;font-size:6.20px;font-weight:bold;color:#2e2e2e;transform:scaleX(0.8689);-webkit-text-stroke:0.02px #2e2e2e;letter-spacing:0.28px;">Employer Details :-</div><div class="t" style="left:19.60px;top:376.40px;font-size:6.20px;font-weight:bold;color:#2e2e2e;transform:scaleX(0.8862);-webkit-text-stroke:0.02px #2e2e2e;letter-spacing:0.28px;">Total number of Employees in the month</div><div class="t" style="left:19.60px;top:390.20px;font-size:6.20px;font-weight:bold;color:#2e2e2e;transform:scaleX(0.8802);-webkit-text-stroke:0.02px #2e2e2e;letter-spacing:0.28px;">Number of excluded employees</div><div class="t" style="left:19.60px;top:404.90px;font-size:6.20px;font-weight:bold;color:#2e2e2e;transform:scaleX(0.8667);-webkit-text-stroke:0.02px #2e2e2e;letter-spacing:0.28px;">Gross wages of the Excluded Employees (&#358;)</div><div class="t" style="left:367.10px;top:414.00px;font-size:7.90px;font-weight:normal;color:#5a5a5a;transform:scaleX(0.8682);">Click to generate challan.</div><div class="t" style="left:343.00px;top:439.60px;font-size:4.70px;font-weight:normal;color:#ffffff;transform:scaleX(0.9108);-webkit-text-stroke:0.1px #fff;">Generate Challan</div><div class="t" style="left:387.10px;top:438.70px;font-size:5.10px;font-weight:normal;color:#333;transform:scaleX(0.9688);">Cancel</div>
</body></html>
